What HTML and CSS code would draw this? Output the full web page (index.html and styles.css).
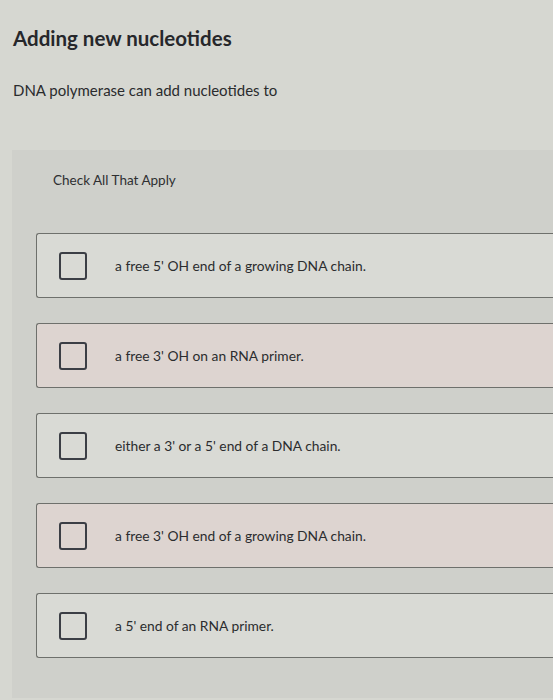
FILE: index.html
```html
<!DOCTYPE html>
<html>
<head>
<meta charset="utf-8">
<link rel="stylesheet" href="styles.css">
</head>
<body>
<div class="page">
  <h1 class="title">Adding new nucleotides</h1>
  <p class="prompt">DNA polymerase can add nucleotides to</p>
  <div class="panel">
    <div class="instr">Check All That Apply</div>
    <div class="options">
      <label class="opt grey"><span class="box"></span><span class="txt">a free 5' OH end of a growing DNA chain.</span></label>
      <label class="opt pink"><span class="box"></span><span class="txt">a free 3' OH on an RNA primer.</span></label>
      <label class="opt grey"><span class="box"></span><span class="txt">either a 3' or a 5' end of a DNA chain.</span></label>
      <label class="opt pink"><span class="box"></span><span class="txt">a free 3' OH end of a growing DNA chain.</span></label>
      <label class="opt grey"><span class="box"></span><span class="txt">a 5' end of an RNA primer.</span></label>
    </div>
  </div>
</div>
</body>
</html>
```
FILE: styles.css
```css
html, body {
  margin: 0;
  padding: 0;
}
body {
  background: #d6d7d1;
  font-family: Lato, "Open Sans", sans-serif;
  color: #2b2c2e;
  width: 553px;
  height: 700px;
  overflow: hidden;
}
.page {
  padding: 26px 0 0 13px;
}
.title {
  margin: 0;
  font-size: 20.5px;
  font-weight: 700;
  color: #26272b;
  line-height: 24px;
}
.prompt {
  margin: 30px 0 0 0;
  font-size: 15px;
  line-height: 20px;
  color: #2a2b2d;
}
.panel {
  margin-top: 50px;
  margin-left: -1px;
  background: #cfd0cb;
  padding: 22px 0 40px 24px;
}
.instr {
  font-size: 13.5px;
  line-height: 16px;
  padding-left: 17px;
  color: #2e2f31;
}
.options {
  margin-top: 45px;
  display: flex;
  flex-direction: column;
  gap: 25px;
}
.opt {
  display: flex;
  align-items: center;
  border: 1px solid #6e706c;
  border-right: none;
  border-radius: 3px 0 0 3px;
  padding-left: 22px;
  box-sizing: border-box;
  height: 65px;
}
.opt.grey { background: #d9dad5; }
.opt.pink { background: #ddd4d0; }
.box {
  width: 24px;
  height: 24px;
  border: 2px solid #3b3e45;
  border-radius: 3px;
  flex: none;
}
.txt {
  margin-left: 28px;
  font-size: 13.8px;
  color: #2b2c2e;
}
```
